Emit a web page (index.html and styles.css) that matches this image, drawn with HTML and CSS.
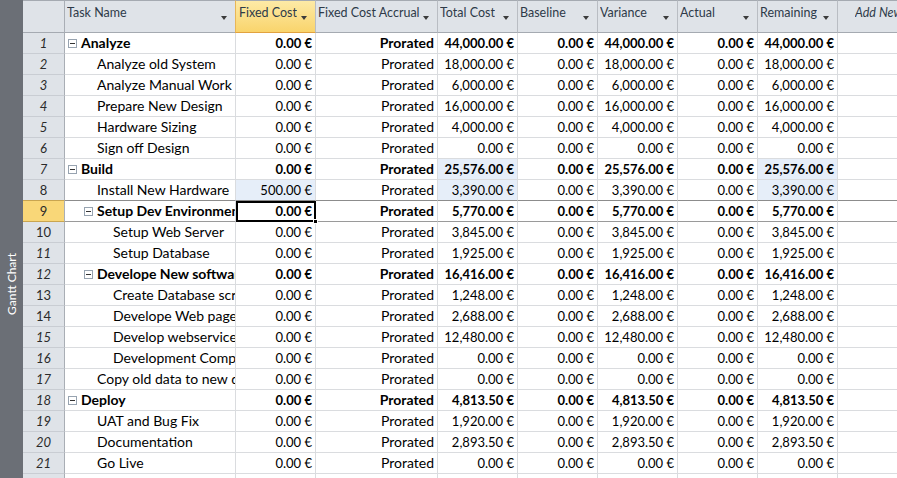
FILE: index.html
```html
<!DOCTYPE html>
<html>
<head>
<meta charset="utf-8">
<link rel="stylesheet" href="styles.css">
</head>
<body>
<div class="app">
  <div class="sidebar"><span class="side-label">Gantt Chart</span></div>
  <div class="sheet">
    <div class="row head">
      <div class="c hn"></div>
      <div class="c h"><span>Task Name</span><i class="arr"></i></div>
      <div class="c h hsel"><span>Fixed Cost</span><i class="arr"></i></div>
      <div class="c h"><span>Fixed Cost Accrual</span><i class="arr"></i></div>
      <div class="c h"><span>Total Cost</span><i class="arr"></i></div>
      <div class="c h"><span>Baseline</span><i class="arr"></i></div>
      <div class="c h"><span>Variance</span><i class="arr"></i></div>
      <div class="c h"><span>Actual</span><i class="arr"></i></div>
      <div class="c h"><span>Remaining</span><i class="arr"></i></div>
      <div class="c h hadd"><span>Add New Column</span></div>
    </div>

    <div class="row sum">
      <div class="c n it">1</div>
      <div class="c t l1"><i class="tog"></i>Analyze</div>
      <div class="c m">0.00 €</div><div class="c m p">Prorated</div><div class="c m">44,000.00 €</div><div class="c m">0.00 €</div><div class="c m">44,000.00 €</div><div class="c m">0.00 €</div><div class="c m">44,000.00 €</div><div class="c e"></div>
    </div>
    <div class="row">
      <div class="c n it">2</div>
      <div class="c t l2">Analyze old System</div>
      <div class="c m">0.00 €</div><div class="c m p">Prorated</div><div class="c m">18,000.00 €</div><div class="c m">0.00 €</div><div class="c m">18,000.00 €</div><div class="c m">0.00 €</div><div class="c m">18,000.00 €</div><div class="c e"></div>
    </div>
    <div class="row">
      <div class="c n it">3</div>
      <div class="c t l2">Analyze Manual Work</div>
      <div class="c m">0.00 €</div><div class="c m p">Prorated</div><div class="c m">6,000.00 €</div><div class="c m">0.00 €</div><div class="c m">6,000.00 €</div><div class="c m">0.00 €</div><div class="c m">6,000.00 €</div><div class="c e"></div>
    </div>
    <div class="row">
      <div class="c n it">4</div>
      <div class="c t l2">Prepare New Design</div>
      <div class="c m">0.00 €</div><div class="c m p">Prorated</div><div class="c m">16,000.00 €</div><div class="c m">0.00 €</div><div class="c m">16,000.00 €</div><div class="c m">0.00 €</div><div class="c m">16,000.00 €</div><div class="c e"></div>
    </div>
    <div class="row">
      <div class="c n it">5</div>
      <div class="c t l2">Hardware Sizing</div>
      <div class="c m">0.00 €</div><div class="c m p">Prorated</div><div class="c m">4,000.00 €</div><div class="c m">0.00 €</div><div class="c m">4,000.00 €</div><div class="c m">0.00 €</div><div class="c m">4,000.00 €</div><div class="c e"></div>
    </div>
    <div class="row">
      <div class="c n it">6</div>
      <div class="c t l2">Sign off Design</div>
      <div class="c m">0.00 €</div><div class="c m p">Prorated</div><div class="c m">0.00 €</div><div class="c m">0.00 €</div><div class="c m">0.00 €</div><div class="c m">0.00 €</div><div class="c m">0.00 €</div><div class="c e"></div>
    </div>
    <div class="row sum">
      <div class="c n it">7</div>
      <div class="c t l1"><i class="tog"></i>Build</div>
      <div class="c m">0.00 €</div><div class="c m p">Prorated</div><div class="c m chg">25,576.00 €</div><div class="c m">0.00 €</div><div class="c m">25,576.00 €</div><div class="c m">0.00 €</div><div class="c m chg">25,576.00 €</div><div class="c e"></div>
    </div>
    <div class="row pre-active">
      <div class="c n">8</div>
      <div class="c t l2">Install New Hardware</div>
      <div class="c m chg">500.00 €</div><div class="c m p">Prorated</div><div class="c m chg">3,390.00 €</div><div class="c m">0.00 €</div><div class="c m">3,390.00 €</div><div class="c m">0.00 €</div><div class="c m chg">3,390.00 €</div><div class="c e"></div>
    </div>
    <div class="row sum active">
      <div class="c n nsel">9</div>
      <div class="c t l2"><i class="tog"></i>Setup Dev Environment</div>
      <div class="c m cur">0.00 €</div><div class="c m p">Prorated</div><div class="c m">5,770.00 €</div><div class="c m">0.00 €</div><div class="c m">5,770.00 €</div><div class="c m">0.00 €</div><div class="c m">5,770.00 €</div><div class="c e"></div>
    </div>
    <div class="row">
      <div class="c n">10</div>
      <div class="c t l3">Setup Web Server</div>
      <div class="c m">0.00 €</div><div class="c m p">Prorated</div><div class="c m">3,845.00 €</div><div class="c m">0.00 €</div><div class="c m">3,845.00 €</div><div class="c m">0.00 €</div><div class="c m">3,845.00 €</div><div class="c e"></div>
    </div>
    <div class="row">
      <div class="c n it">11</div>
      <div class="c t l3">Setup Database</div>
      <div class="c m">0.00 €</div><div class="c m p">Prorated</div><div class="c m">1,925.00 €</div><div class="c m">0.00 €</div><div class="c m">1,925.00 €</div><div class="c m">0.00 €</div><div class="c m">1,925.00 €</div><div class="c e"></div>
    </div>
    <div class="row sum">
      <div class="c n it">12</div>
      <div class="c t l2"><i class="tog"></i>Develope New software</div>
      <div class="c m">0.00 €</div><div class="c m p">Prorated</div><div class="c m">16,416.00 €</div><div class="c m">0.00 €</div><div class="c m">16,416.00 €</div><div class="c m">0.00 €</div><div class="c m">16,416.00 €</div><div class="c e"></div>
    </div>
    <div class="row">
      <div class="c n">13</div>
      <div class="c t l3">Create Database scripts</div>
      <div class="c m">0.00 €</div><div class="c m p">Prorated</div><div class="c m">1,248.00 €</div><div class="c m">0.00 €</div><div class="c m">1,248.00 €</div><div class="c m">0.00 €</div><div class="c m">1,248.00 €</div><div class="c e"></div>
    </div>
    <div class="row">
      <div class="c n">14</div>
      <div class="c t l3">Develope Web pages</div>
      <div class="c m">0.00 €</div><div class="c m p">Prorated</div><div class="c m">2,688.00 €</div><div class="c m">0.00 €</div><div class="c m">2,688.00 €</div><div class="c m">0.00 €</div><div class="c m">2,688.00 €</div><div class="c e"></div>
    </div>
    <div class="row">
      <div class="c n it">15</div>
      <div class="c t l3">Develop webservices</div>
      <div class="c m">0.00 €</div><div class="c m p">Prorated</div><div class="c m">12,480.00 €</div><div class="c m">0.00 €</div><div class="c m">12,480.00 €</div><div class="c m">0.00 €</div><div class="c m">12,480.00 €</div><div class="c e"></div>
    </div>
    <div class="row">
      <div class="c n it">16</div>
      <div class="c t l3">Development Complete</div>
      <div class="c m">0.00 €</div><div class="c m p">Prorated</div><div class="c m">0.00 €</div><div class="c m">0.00 €</div><div class="c m">0.00 €</div><div class="c m">0.00 €</div><div class="c m">0.00 €</div><div class="c e"></div>
    </div>
    <div class="row">
      <div class="c n it">17</div>
      <div class="c t l2">Copy old data to new database</div>
      <div class="c m">0.00 €</div><div class="c m p">Prorated</div><div class="c m">0.00 €</div><div class="c m">0.00 €</div><div class="c m">0.00 €</div><div class="c m">0.00 €</div><div class="c m">0.00 €</div><div class="c e"></div>
    </div>
    <div class="row sum">
      <div class="c n it">18</div>
      <div class="c t l1"><i class="tog"></i>Deploy</div>
      <div class="c m">0.00 €</div><div class="c m p">Prorated</div><div class="c m">4,813.50 €</div><div class="c m">0.00 €</div><div class="c m">4,813.50 €</div><div class="c m">0.00 €</div><div class="c m">4,813.50 €</div><div class="c e"></div>
    </div>
    <div class="row">
      <div class="c n it">19</div>
      <div class="c t l2">UAT and Bug Fix</div>
      <div class="c m">0.00 €</div><div class="c m p">Prorated</div><div class="c m">1,920.00 €</div><div class="c m">0.00 €</div><div class="c m">1,920.00 €</div><div class="c m">0.00 €</div><div class="c m">1,920.00 €</div><div class="c e"></div>
    </div>
    <div class="row">
      <div class="c n it">20</div>
      <div class="c t l2">Documentation</div>
      <div class="c m">0.00 €</div><div class="c m p">Prorated</div><div class="c m">2,893.50 €</div><div class="c m">0.00 €</div><div class="c m">2,893.50 €</div><div class="c m">0.00 €</div><div class="c m">2,893.50 €</div><div class="c e"></div>
    </div>
    <div class="row">
      <div class="c n it">21</div>
      <div class="c t l2">Go Live</div>
      <div class="c m">0.00 €</div><div class="c m p">Prorated</div><div class="c m">0.00 €</div><div class="c m">0.00 €</div><div class="c m">0.00 €</div><div class="c m">0.00 €</div><div class="c m">0.00 €</div><div class="c e"></div>
    </div>
    <div class="row">
      <div class="c n"></div>
      <div class="c t"></div>
      <div class="c m"></div><div class="c m"></div><div class="c m"></div><div class="c m"></div><div class="c m"></div><div class="c m"></div><div class="c m"></div><div class="c e"></div>
    </div>
  </div>
</div>
</body>
</html>
```

FILE: styles.css
```css
html, body {
  margin: 0;
  padding: 0;
  background: #ffffff;
  overflow: hidden;
}
body {
  font-family: Lato, "Open Sans", sans-serif;
  font-size: 14px;
  color: #000;
}
.app {
  display: flex;
  width: 897px;
  height: 478px;
  overflow: hidden;
}
.sidebar {
  width: 23px;
  flex: none;
  background: #6b6f76;
  display: flex;
  justify-content: center;
  align-items: flex-start;
  padding-top: 253px;
  box-sizing: border-box;
}
.side-label {
  writing-mode: vertical-rl;
  transform: rotate(180deg);
  color: #ffffff;
  font-size: 12px;
  line-height: 13px;
  white-space: nowrap;
}
.sheet {
  flex: 1;
  min-width: 0;
  display: flex;
  flex-direction: column;
}
.row {
  display: grid;
  grid-template-columns: 42px 171px 80px 122px 80px 80px 80px 80px 80px 1fr;
  height: 21px;
  flex: none;
}
.c {
  box-sizing: border-box;
  border-right: 1px solid #dadcdf;
  border-bottom: 1px solid #dadcdf;
  line-height: 20px;
  white-space: nowrap;
  overflow: hidden;
  position: relative;
}
.m {
  text-align: right;
  padding-right: 3px;
  font-size: 13px;
}
.m.p {
  font-size: 14px;
}
.e {
  border-right: none;
}
.n {
  background: #dfe3e8;
  text-align: center;
  color: #2b2b2b;
  border-bottom-color: #c9cdd3;
  border-right-color: #a9aeb5;
  font-size: 13px;
}
.n.it {
  font-style: italic;
}
.sum .t, .sum .m {
  font-weight: bold;
}
.t {
  text-overflow: clip;
}
.l1 { padding-left: 16px; }
.l2 { padding-left: 32px; }
.l3 { padding-left: 48px; }
.tog {
  display: inline-block;
  box-sizing: border-box;
  width: 9px;
  height: 9px;
  margin-left: -13px;
  margin-right: 4px;
  border: 1px solid #97a3b0;
  background: #ffffff;
  vertical-align: 0px;
  position: relative;
}
.tog::after {
  content: "";
  position: absolute;
  left: 1px;
  top: 3px;
  width: 5px;
  height: 1px;
  background: #333;
}
.chg {
  background: #e6eef9;
}
.active .c {
  border-bottom-color: #9a9a9a;
}
.pre-active .c {
  border-bottom-color: #8c8c8c;
}
.nsel {
  background: #f9d778;
}
.active .nsel, .pre-active .n {
  border-bottom-color: #c9a550;
}
.cur {
  outline: 2px solid #000;
  outline-offset: -2px;
  overflow: visible;
  z-index: 2;
}
.cur::after {
  content: "";
  position: absolute;
  right: -3px;
  bottom: -3px;
  width: 5px;
  height: 5px;
  background: #000;
  border: 1px solid #fff;
  box-sizing: border-box;
}

/* header */
.head {
  height: 33px;
}
.head .c {
  background: #dfe3e8;
  border-top: 1px solid #a5aab1;
  border-bottom: 1px solid #a5aab1;
  border-right: 1px solid #b9bdc3;
  line-height: 15px;
  font-size: 12.5px;
  color: #2e3a48;
}
.h {
  display: flex;
  align-items: flex-start;
  padding: 4px 0 0 2px;
}
.h span {
  overflow: hidden;
  white-space: nowrap;
  min-width: 0;
}
.arr {
  flex: none;
  margin-left: auto;
  margin-right: 8px;
  margin-top: 11px;
  width: 0;
  height: 0;
  border-left: 3.5px solid transparent;
  border-right: 3.5px solid transparent;
  border-top: 4px solid #3c3c3c;
}
.h span + .arr {
  padding-left: 0;
}
.hsel {
  background: linear-gradient(#fdeaa6, #f9d46c) !important;
  border-bottom-color: #e2a23f !important;
  border-left: 1px solid #e8b657;
  margin-left: -1px;
  padding-left: 3px;
}
.hadd {
  font-style: italic;
  padding-left: 17px;
  border-right: none !important;
}
.head .hn {
  border-right-color: #a9aeb5;
}
```
